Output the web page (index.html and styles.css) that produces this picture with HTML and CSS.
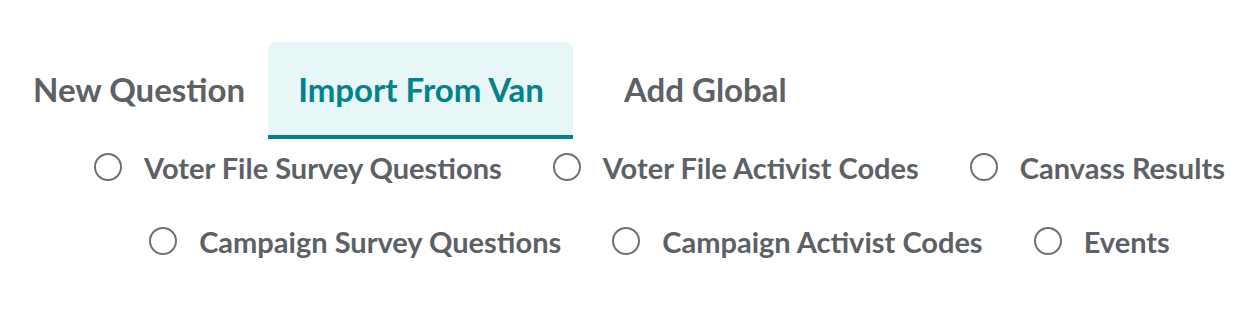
FILE: index.html
```html
<!DOCTYPE html>
<html lang="en">
<head>
    <meta charset="UTF-8">
    <meta name="viewport" content="width=device-width, initial-scale=1.0">
    <title>Add Question</title>
    <link rel="stylesheet" href="styles.css">
</head>
<body>
    <div class="question-picker">
        <nav class="tabs">
            <a href="#" class="tab">New Question</a>
            <a href="#" class="tab active">Import From Van</a>
            <a href="#" class="tab tab-global">Add Global</a>
        </nav>

        <div class="van-sources">
            <div class="source-row">
                <label class="source"><input type="radio" name="source"><span>Voter File Survey Questions</span></label>
                <label class="source"><input type="radio" name="source"><span>Voter File Activist Codes</span></label>
                <label class="source"><input type="radio" name="source"><span>Canvass Results</span></label>
            </div>
            <div class="source-row">
                <label class="source"><input type="radio" name="source"><span>Campaign Survey Questions</span></label>
                <label class="source"><input type="radio" name="source"><span>Campaign Activist Codes</span></label>
                <label class="source"><input type="radio" name="source"><span>Events</span></label>
            </div>
        </div>
    </div>
</body>
</html>
```

FILE: styles.css
```css
body {
    font-family: 'Lato', 'Open Sans', sans-serif;
    margin: 0;
    padding: 0;
    background-color: #fff;
    color: #5c6166;
}
.question-picker {
    padding-top: 42px;
}
.tabs {
    display: flex;
    align-items: stretch;
    padding-left: 7px;
}
.tab {
    display: flex;
    align-items: center;
    height: 93px;
    padding: 0 26px;
    border-bottom: 4px solid transparent;
    border-radius: 8px 8px 0 0;
    font-size: 33px;
    font-weight: 700;
    color: #5c6166;
    text-decoration: none;
    white-space: nowrap;
}
.tab:first-child {
    padding-right: 23px;
}
.tab.active {
    padding: 0 29px 0 30px;
    background-color: #e7f6f7;
    border-bottom-color: #00838a;
    color: #00838a;
}
.tab-global {
    margin-left: 25px;
}
.van-sources {
    display: flex;
    flex-direction: column;
    gap: 34px;
    padding: 8px 0 0 61px;
}
.source-row {
    display: flex;
    justify-content: center;
    align-items: center;
    gap: 51px;
    height: 40px;
}
.source {
    display: flex;
    align-items: center;
    gap: 22px;
    font-size: 29px;
    font-weight: 700;
    white-space: nowrap;
    cursor: pointer;
}
.source input {
    appearance: none;
    -webkit-appearance: none;
    margin: 0;
    width: 28px;
    height: 28px;
    border: 2px solid #707070;
    border-radius: 50%;
    background-color: #fff;
    box-sizing: border-box;
}
```
